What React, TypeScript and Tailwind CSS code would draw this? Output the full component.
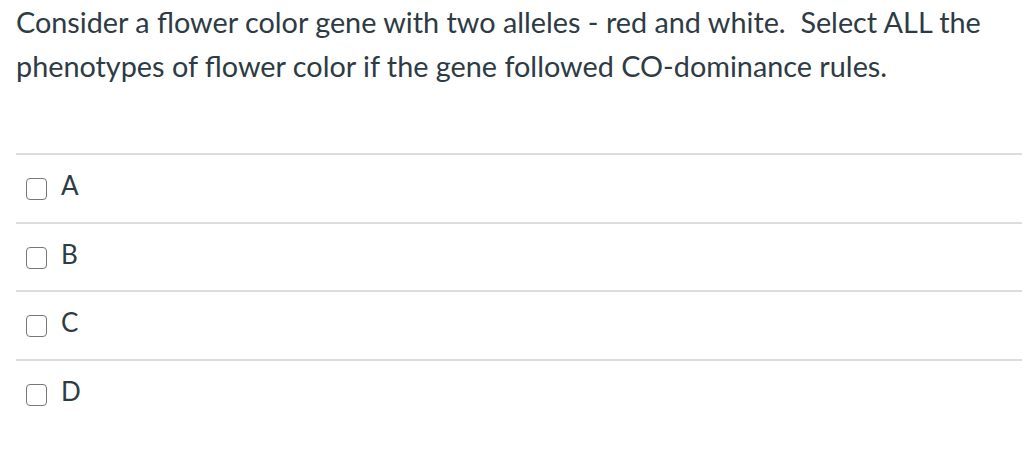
import React from "react";

export default function App() {
  const opts = ["A", "B", "C", "D"];
  return (
    <div className="w-[1036px] h-[450px] bg-white pl-4 pr-[14px] text-[#2d3b45]" style={{ fontFamily: "Lato, 'Open Sans', sans-serif" }}>
      <p className="text-[28.8px] leading-[44px]">
        Consider a flower color gene with two alleles - red and white.&nbsp; Select ALL the phenotypes of flower color if the gene followed CO-dominance rules.
      </p>
      <div className="mt-[65px]">
        {opts.map((o) => (
          <div key={o} className="border-t-2 border-[#dcdcdc] h-[68.7px] flex items-start pt-[22px] pl-[10px] gap-[14px]">
            <span className="w-[21px] h-[22px] mt-[1px] rounded-[4px] border-[1.5px] border-[#777] bg-white" />
            <span className="text-[26px] leading-[20px] -mt-[2px]">{o}</span>
          </div>
        ))}
      </div>
    </div>
  );
}
